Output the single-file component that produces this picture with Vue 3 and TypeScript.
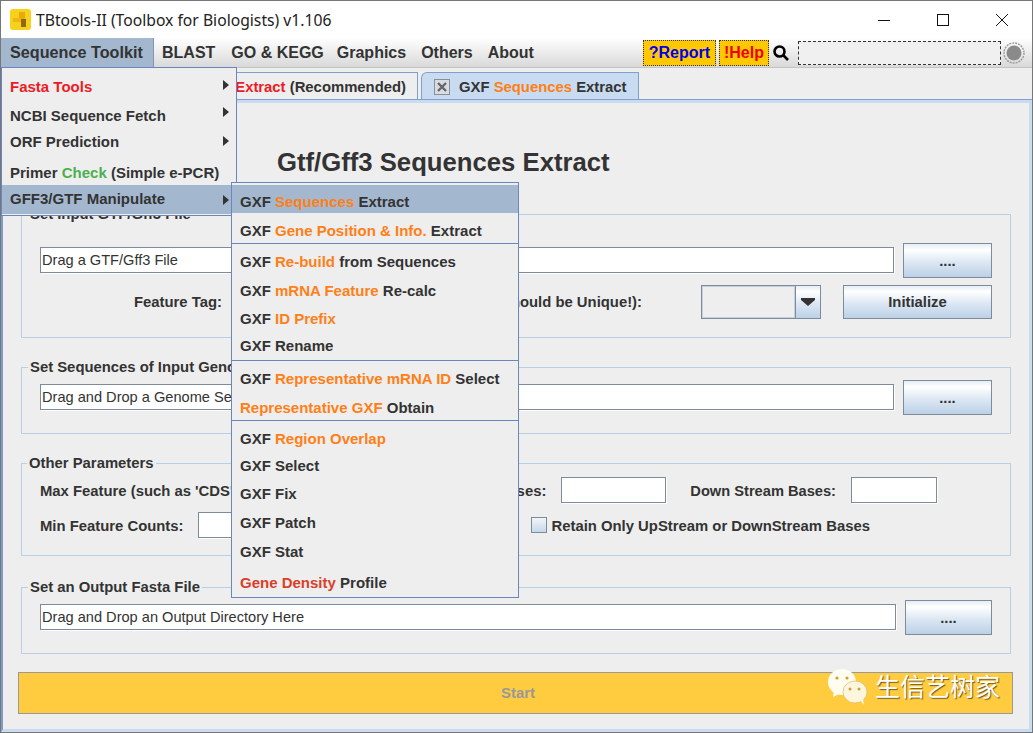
<template>
  <div class="window">
    <header class="titlebar">
      <svg class="logo" width="21" height="21" viewBox="0 0 21 21">
        <rect width="21" height="21" rx="3" fill="#f7d21c" />
        <rect x="9" y="3" width="6" height="7" fill="#e9a90d" />
        <rect x="3" y="9" width="8" height="4" fill="#f0b70f" />
        <rect x="11" y="10" width="5" height="8" fill="#8f6a12" />
      </svg>
      <span class="app-title">TBtools-II (Toolbox for Biologists) v1.106</span>
      <div class="win-controls">
        <svg width="14" height="14" viewBox="0 0 14 14"><path d="M1 7.5h12" stroke="#111" fill="none" /></svg>
        <svg width="14" height="14" viewBox="0 0 14 14"><rect x="1.5" y="1.5" width="11" height="11" stroke="#111" fill="none" /></svg>
        <svg width="14" height="14" viewBox="0 0 14 14"><path d="M1 1l12 12M13 1L1 13" stroke="#111" fill="none" /></svg>
      </div>
    </header>

    <nav class="menubar">
      <span class="top-item active">Sequence Toolkit</span>
      <span class="top-item blast">BLAST</span>
      <span class="top-item go">GO &amp; KEGG</span>
      <span class="top-item graphics">Graphics</span>
      <span class="top-item others">Others</span>
      <span class="top-item about">About</span>
      <button class="flag report">?Report</button>
      <button class="flag help">!Help</button>
      <svg class="search-icon" width="18" height="18" viewBox="0 0 18 18">
        <circle cx="7.5" cy="7.5" r="5" fill="none" stroke="#000" stroke-width="2.6" />
        <path d="M11 11l5 5" stroke="#000" stroke-width="2.6" />
      </svg>
      <div class="search-box"></div>
      <svg class="memory" width="22" height="22" viewBox="0 0 22 22">
        <circle cx="11" cy="11" r="10" fill="none" stroke="#999" stroke-width="1.4" stroke-dasharray="2 1" />
        <circle cx="11" cy="11" r="7.5" fill="#8a8a8a" />
      </svg>
    </nav>

    <div class="tabs">
      <div class="tab tab-back">
        <span>Fasta <span class="red">Extract</span> (Recommended)</span>
      </div>
      <div class="tab tab-front">
        <svg class="tab-close" width="16" height="16" viewBox="0 0 16 16">
          <rect x="0.5" y="0.5" width="15" height="15" fill="#d8dde3" stroke="#8a8f96" />
          <path d="M4 4l8 8M12 4l-8 8" stroke="#666" stroke-width="2.4" />
        </svg>
        <span>GXF <span class="orange">Sequences</span> Extract</span>
      </div>
    </div>

    <main class="panel">
      <h1 class="heading">Gtf/Gff3 Sequences Extract</h1>

      <fieldset class="group first">
        <legend>Set Input GTF/Gff3 File</legend>
        <div class="row">
          <div class="field grow">Drag a GTF/Gff3 File</div>
          <button class="btn browse">....</button>
        </div>
        <div class="row tag-row">
          <label class="tag-label">Feature Tag:</label>
          <label class="key-label">Feature ID Key (Should be Unique!):</label>
          <div class="combo">
            <div class="combo-value"></div>
            <div class="combo-arrow">
              <svg width="14" height="8" viewBox="0 0 14 8"><path d="M0 0h14v2L7 8 0 2z" fill="#333" /></svg>
            </div>
          </div>
          <button class="btn init">Initialize</button>
        </div>
      </fieldset>

      <fieldset class="group second">
        <legend>Set Sequences of Input Genome</legend>
        <div class="row">
          <div class="field grow">Drag and Drop a Genome Sequence File Here</div>
          <button class="btn browse">....</button>
        </div>
      </fieldset>

      <fieldset class="group third">
        <legend>Other Parameters</legend>
        <div class="row params-one">
          <label class="grow">Max Feature (such as 'CDS') Counts:</label>
          <label>Up Stream Bases:</label>
          <div class="field up"></div>
          <label class="down-label">Down Stream Bases:</label>
          <div class="field down"></div>
        </div>
        <div class="row params-two">
          <label>Min Feature Counts:</label>
          <div class="field min"></div>
          <span class="check"></span>
          <label>Retain Only UpStream or DownStream Bases</label>
        </div>
      </fieldset>

      <fieldset class="group fourth">
        <legend>Set an Output Fasta File</legend>
        <div class="row">
          <div class="field grow">Drag and Drop an Output Directory Here</div>
          <button class="btn browse narrow">....</button>
        </div>
      </fieldset>

      <button class="start">Start</button>
    </main>

    <div class="popup main-menu">
      <div
        v-for="item in mainItems"
        :key="item.parts.map(p => p.t).join('')"
        class="menu-item"
        :class="{ hot: item.hot }"
        :style="{ height: item.h + 'px', paddingTop: item.pad + 'px' }"
      >
        <span><span v-for="p in item.parts" :key="p.t" :style="{ color: p.c }">{{ p.t }}</span></span>
        <i v-if="item.arrow" class="arrow"></i>
      </div>
    </div>

    <div class="popup sub-menu">
      <div v-for="(group, g) in subGroups" :key="g" class="sub-group">
        <div
          v-for="item in group"
          :key="item.parts.map(p => p.t).join('')"
          class="menu-item sub-item"
          :class="{ hot: item.hot }"
          :style="{ height: item.h + 'px', paddingTop: item.pad + 'px' }"
        >
          <span><span v-for="p in item.parts" :key="p.t" :style="{ color: p.c }">{{ p.t }}</span></span>
        </div>
      </div>
    </div>

    <div class="watermark">
      <svg width="40" height="36" viewBox="0 0 40 36">
        <ellipse cx="14" cy="13" rx="14" ry="13" fill="#fffdf0" />
        <path d="M6 21l-1 7 8-4z" fill="#fffdf0" />
        <circle cx="9" cy="9" r="1.6" fill="#c9a23c" />
        <circle cx="19" cy="9" r="1.6" fill="#c9a23c" />
        <ellipse cx="27" cy="23" rx="12" ry="11" fill="#fdf6df" stroke="#d5b04c" stroke-width="0.6" />
        <path d="M32 31l4 5-1-7z" fill="#fdf6df" />
        <circle cx="22" cy="20" r="1.5" fill="#c9a23c" />
        <circle cx="31" cy="20" r="1.5" fill="#c9a23c" />
      </svg>
      <span class="wm-text">生信艺树家</span>
    </div>
  </div>
</template>

<script setup lang="ts">
interface Part { t: string; c?: string }
interface Item { parts: Part[]; h: number; pad: number; hot?: boolean; arrow?: boolean }

const ORANGE = '#ff7f17'
const item = (h: number, pad: number, ...parts: Part[]): Item => ({ parts, h, pad })

const mainItems: Item[] = [
  { parts: [{ t: 'Fasta Tools', c: '#ed1c24' }], h: 29, pad: 11, arrow: true },
  { parts: [{ t: 'NCBI Sequence Fetch' }], h: 26, pad: 11, arrow: true },
  { parts: [{ t: 'ORF Prediction' }], h: 31, pad: 11, arrow: true },
  { parts: [{ t: 'Primer ' }, { t: 'Check', c: '#4cb04f' }, { t: ' (Simple e-PCR)' }], h: 31, pad: 11 },
  { parts: [{ t: 'GFF3/GTF Manipulate' }], h: 29, pad: 6, arrow: true, hot: true },
]

const subGroups: Item[][] = [
  [
    { parts: [{ t: 'GXF ' }, { t: 'Sequences', c: ORANGE }, { t: ' Extract' }], h: 28, pad: 9, hot: true },
    item(30, 10, { t: 'GXF ' }, { t: 'Gene Position & Info.', c: ORANGE }, { t: ' Extract' }),
  ],
  [
    item(29, 10, { t: 'GXF ' }, { t: 'Re-build', c: ORANGE }, { t: ' from Sequences' }),
    item(28, 10, { t: 'GXF ' }, { t: 'mRNA Feature', c: ORANGE }, { t: ' Re-calc' }),
    item(27, 10, { t: 'GXF ' }, { t: 'ID Prefix', c: ORANGE }),
    item(32, 10, { t: 'GXF Rename' }),
  ],
  [
    item(29, 10, { t: 'GXF ' }, { t: 'Representative mRNA ID', c: ORANGE }, { t: ' Select' }),
    item(30, 10, { t: 'Representative GXF', c: ORANGE }, { t: ' Obtain' }),
  ],
  [
    item(27, 10, { t: 'GXF ' }, { t: 'Region Overlap', c: ORANGE }),
    item(28, 10, { t: 'GXF Select' }),
    item(29, 10, { t: 'GXF Fix' }),
    item(29, 10, { t: 'GXF Patch' }),
    item(31, 10, { t: 'GXF Stat' }),
    item(31, 10, { t: 'Gene Density', c: '#d9402a' }, { t: ' Profile' }),
  ],
]
</script>

<style>
html, body {
  margin: 0;
  background: #eee;
}
</style>

<style scoped>
.window {
  position: relative;
  box-sizing: border-box;
  width: 1033px;
  height: 733px;
  display: flex;
  flex-direction: column;
  border: 1px solid #777;
  background: #eee;
  font-family: "Liberation Sans", Arial, sans-serif;
  font-size: 14.85px;
  font-weight: 700;
  color: #333;
  overflow: hidden;
}

.titlebar {
  height: 37px;
  flex: none;
  display: flex;
  align-items: center;
  padding-left: 9px;
  background: #fff;
}
.logo { margin-right: 5px; }
.app-title {
  font-family: "Noto Sans", sans-serif;
  font-size: 15.7px;
  font-weight: 400;
  color: #222;
}
.win-controls {
  margin-left: auto;
  display: flex;
  gap: 45px;
  padding-right: 23px;
}

.menubar {
  height: 29px;
  flex: none;
  display: flex;
  align-items: center;
  background: linear-gradient(#fff, #d9d9d9);
  border-bottom: 1px solid #c4c4c4;
  font-size: 16px;
}
.top-item { white-space: nowrap; }
.top-item.active {
  align-self: stretch;
  display: flex;
  align-items: center;
  width: 143px;
  padding-left: 9px;
  font-size: 16.2px;
  background: #a3b8cf;
  border-right: 1px solid #7f97b3;
}
.blast { margin-left: 8px; }
.go { margin-left: 16px; }
.graphics { margin-left: 13px; }
.others { margin-left: 15px; }
.about { margin-left: 15px; }
.flag {
  height: 26px;
  box-sizing: border-box;
  padding: 0;
  border: 1px dotted #333;
  background: #ffc800;
  font: inherit;
}
.report { width: 73px; margin-left: 109px; color: #0000f0; }
.help { width: 50px; margin-left: 3px; color: #f00000; }
.search-icon { margin-left: 3px; }
.search-box {
  width: 203px;
  height: 24px;
  box-sizing: border-box;
  margin-left: 8px;
  border: 1px dashed #333;
  background: #f0f0f0;
}
.memory { margin-left: 2px; }

.tabs {
  height: 32px;
  flex: none;
  display: flex;
  align-items: flex-end;
  gap: 3px;
  padding-left: 2px;
  border-bottom: 1px solid #7fa0cd;
  box-sizing: border-box;
}
.tab {
  height: 27px;
  box-sizing: border-box;
  display: flex;
  align-items: center;
  padding-top: 1px;
  border: 1px solid #7fa0cd;
  border-bottom: 0;
  border-radius: 6px 0 0 0;
}
.tab-back {
  width: 415px;
  justify-content: flex-end;
  padding-right: 11px;
}
.tab-front {
  width: 218px;
  padding-left: 12px;
  background: #c8dbf0;
}
.tab-close { margin-right: 9px; }
.red { color: #ed1c24; }
.orange { color: #ff7f17; }

.panel {
  flex: 1;
  min-height: 0;
  display: flex;
  flex-direction: column;
  padding: 0 18px;
  border-left: 2px solid #7b9cc9;
  border-right: 3px solid #c8dbf0;
  border-bottom: 3px solid #c8dbf0;
  border-top: 3px solid #c8dbf0;
}
.heading {
  margin: 44px 0 0 256px;
  height: 30px;
  font-size: 25.7px;
  line-height: 30px;
  font-weight: 700;
  white-space: nowrap;
  color: #333;
}

.group {
  margin: 0;
  padding: 0 18px;
  border: 1px solid #b8cfe4;
  box-sizing: border-box;
  min-width: 0;
}
.group legend {
  margin-left: -12px;
  padding: 0 2px;
  line-height: 16px;
}
.first { margin-top: 29px; height: 132px; padding-top: 21px; }
.second { margin-top: 21px; height: 75px; padding-top: 5px; }
.third { margin-top: 21px; height: 101px; padding-top: 6px; }
.third legend { margin-left: -13px; }
.fourth { margin-top: 23px; height: 75px; padding-top: 5px; }

.row {
  display: flex;
  align-items: center;
}
.grow { flex: 1; min-width: 0; }
.field {
  height: 26px;
  box-sizing: border-box;
  padding-left: 1px;
  line-height: 24px;
  font-size: 14.6px;
  font-weight: 400;
  color: #333;
  background: #fff;
  border: 1px solid #7d8b9b;
  box-shadow: 1px 1px 0 #fff;
  white-space: nowrap;
  overflow: hidden;
}
.row .field.grow { margin-bottom: 1px; }
.btn {
  height: 35px;
  box-sizing: border-box;
  padding: 0;
  border: 1px solid #7d8b9b;
  background: linear-gradient(#e6edf5, #fff 18%, #dce7f3 55%, #bcd1e7);
  font: inherit;
  color: #333;
}
.browse { width: 89px; margin-left: 9px; }
.browse.narrow { width: 87px; }
.tag-row { margin-top: 7px; height: 34px; }
.tag-label { margin-left: 94px; }
.key-label { margin-left: auto; }
.combo {
  width: 120px;
  height: 34px;
  box-sizing: border-box;
  display: flex;
  margin-left: 59px;
  border: 1px solid #7d8b9b;
}
.combo-value {
  flex: 1;
  border: 1px solid #c4d0dc;
  background: #eee;
}
.combo-arrow {
  width: 24px;
  display: flex;
  align-items: center;
  justify-content: center;
  border-left: 1px solid #7d8b9b;
  background: linear-gradient(#e6edf5, #fff 18%, #dce7f3 55%, #bcd1e7);
}
.init { width: 149px; height: 34px; margin-left: 22px; }
.params-one label,
.params-two label { margin-top: 2px; }
.params-one .up { width: 105px; margin-left: 15px; }
.down-label { margin-left: 24px; font-size: 14.65px; }
.params-one .down { width: 86px; margin-left: 15px; margin-right: 55px; }
.params-two { margin-top: 9px; }
.params-two .min { width: 70px; margin-left: 14px; }
.check {
  width: 16px;
  height: 16px;
  box-sizing: border-box;
  margin-left: 263px;
  margin-right: 5px;
  border: 1px solid #7d8b9b;
  background: linear-gradient(#f2f5f9, #c7d7e8);
}

.start {
  margin: 18px -2px 0 -3px;
  height: 42px;
  flex: none;
  padding: 0 0 0 5px;
  border: 1px solid #999;
  background: #ffcc3f;
  font: inherit;
  color: #999;
}

.popup {
  position: absolute;
  box-sizing: border-box;
  border: 1px solid #6b85c0;
  background: #eee;
}
.main-menu {
  left: 0;
  top: 66px;
  width: 236px;
  height: 149px;
}
.sub-menu {
  left: 230px;
  top: 181px;
  width: 288px;
  height: 416px;
  padding-top: 2px;
}
.menu-item {
  position: relative;
  box-sizing: border-box;
  padding-left: 8px;
  font-size: 15px;
  line-height: 16px;
  white-space: nowrap;
}
.menu-item.hot { background: #a3b8cf; }
.sub-group + .sub-group { border-top: 1px solid #6b85c0; }
.arrow {
  position: absolute;
  right: 7px;
  top: 50%;
  margin-top: -3px;
  border-left: 6px solid #333;
  border-top: 5px solid transparent;
  border-bottom: 5px solid transparent;
}
.hot .arrow { margin-top: -5px; }

.watermark {
  position: absolute;
  left: 827px;
  top: 668px;
  display: flex;
  align-items: center;
  gap: 7px;
  font-family: "Noto Sans CJK SC", sans-serif;
  font-size: 25px;
  font-weight: 400;
  color: #fff;
  text-shadow: 1px 1px 1px #6d5a25;
  pointer-events: none;
}
.wm-text { margin-top: -5px; }
</style>
